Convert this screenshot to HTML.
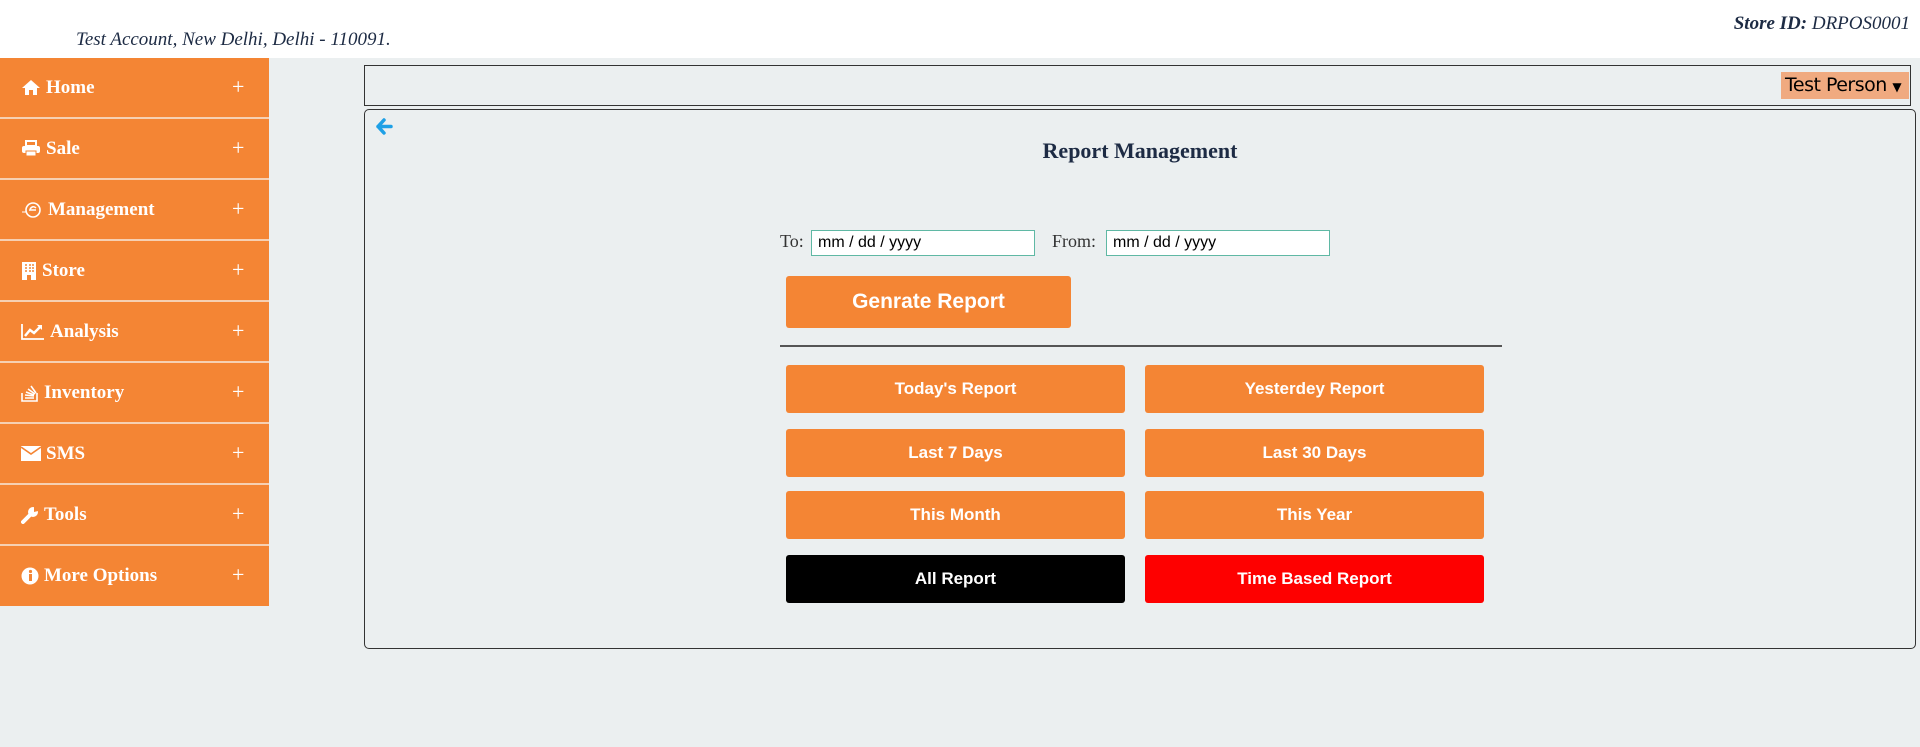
<!DOCTYPE html>
<html><head><meta charset="utf-8"><style>
*{margin:0;padding:0;box-sizing:border-box}
body{width:1920px;height:747px;background:#ebeff0;position:relative;overflow:hidden;font-family:"Liberation Serif",serif}
.hdr{position:absolute;left:0;top:0;width:1920px;height:58px;background:#fff}
.addr{position:absolute;left:76px;top:29px;font-style:italic;font-size:19px;color:#1d2b44;font-family:"Liberation Serif",serif}
.sid{position:absolute;right:10px;top:13px;font-style:italic;font-size:19px;color:#1d2b44}
.side{position:absolute;left:0;top:58px;width:269px}
.it{height:61px;background:#f48534;border-bottom:2px solid #f6d0b2;color:#fff;font-weight:bold;font-size:19px;position:relative;display:flex;align-items:center;padding-left:21px}
.it:last-child{border-bottom:none;height:60px}
.it svg{margin-right:5px}
.it .p{position:absolute;left:232px;font-weight:normal;font-size:22px;top:16px}
.bar{position:absolute;left:364px;top:65px;width:1547px;height:41px;border:1.5px solid #333;background:#ebeff0}
.tp{position:absolute;right:1px;top:6px;height:27px;width:128px;background:#f0aa80;font-family:"DejaVu Sans",sans-serif;font-size:19px;color:#000;padding-left:4px;line-height:27px;letter-spacing:-0.5px}
.main{position:absolute;left:364px;top:109px;width:1552px;height:540px;border:1.5px solid #333;border-radius:5px}
.title{position:absolute;left:0;width:100%;top:28px;text-align:center;font-weight:bold;font-size:22px;color:#1d2b44}
.lbl{position:absolute;font-size:18px;color:#333;top:121px}
.inp{position:absolute;top:120px;width:224px;height:26px;border:1.5px solid #5fb8a4;background:#fff;font-family:"Liberation Sans Narrow","Liberation Sans",sans-serif;font-size:16px;padding-left:6px;line-height:23px;color:#000}
.btn{position:absolute;width:339px;height:48px;background:#f48534;border-radius:3px;color:#fff;font-family:"Liberation Sans",sans-serif;font-weight:bold;font-size:17px;display:flex;align-items:center;justify-content:center}
</style></head><body>
<div class="hdr"><div class="addr">Test Account, New Delhi, Delhi - 110091.</div><div class="sid"><b>Store ID:</b> DRPOS0001</div></div>
<div class="side">
<div class="it"><svg width="20" height="17" viewBox="0 0 20 17"><path d="M10 1 L1 9 H4 V16 H8 V11 H12 V16 H16 V9 H19Z" fill="#fff"/></svg>Home<span class="p">+</span></div>
<div class="it"><svg width="20" height="17" viewBox="0 0 20 17"><rect x="5" y="1" width="10" height="5" fill="none" stroke="#fff" stroke-width="2"/><rect x="1" y="6" width="18" height="7" rx="2" fill="#fff"/><rect x="5" y="11" width="10" height="5" fill="#fff" stroke="#f48534"/></svg>Sale<span class="p">+</span></div>
<div class="it"><svg width="22" height="18" viewBox="0 0 22 18"><circle cx="12" cy="9" r="7" fill="none" stroke="#fff" stroke-width="1.6"/><path d="M8 9 H15 M15 7 Q12 4 9 8" stroke="#fff" fill="none" stroke-width="1.5"/><path d="M1 11 H6" stroke="#fff"/></svg>Management<span class="p">+</span></div>
<div class="it"><svg width="16" height="18" viewBox="0 0 16 18"><rect x="1" y="0" width="14" height="18" fill="#fff"/><path d="M4 3h2M8 3h2M11 3h2M4 6h2M8 6h2M11 6h2M4 9h2M8 9h2M11 9h2" stroke="#f48534" stroke-width="1.5"/><rect x="6" y="13" width="4" height="5" fill="#f48534"/></svg>Store<span class="p">+</span></div>
<div class="it"><svg width="24" height="17" viewBox="0 0 24 17"><path d="M1 1 V16 H23" stroke="#fff" stroke-width="1.8" fill="none"/><path d="M4 13 L9 7 L13 10 L20 3" stroke="#fff" stroke-width="2.5" fill="none"/><path d="M16 2 H21 V7Z" fill="#fff"/></svg>Analysis<span class="p">+</span></div>
<div class="it"><svg width="18" height="18" viewBox="0 0 18 18"><path d="M1 9 V17 H16 V9" stroke="#fff" stroke-width="1.6" fill="none"/><path d="M4 14h9M4 11l9 1M5 8l8 3M7 5l7 5M10 2l5 7" stroke="#fff" stroke-width="1.6"/></svg>Inventory<span class="p">+</span></div>
<div class="it"><svg width="20" height="15" viewBox="0 0 20 15"><rect x="0" y="0" width="20" height="15" fill="#fff"/><path d="M0 1 L10 8 L20 1" stroke="#f48534" stroke-width="1.6" fill="none"/></svg>SMS<span class="p">+</span></div>
<div class="it"><svg width="18" height="18" viewBox="0 0 18 18"><path d="M2 16 L10 8" stroke="#fff" stroke-width="4" stroke-linecap="round"/><circle cx="12" cy="6" r="5" fill="#fff"/><path d="M13 1 L17 1 L17 5 L13 6Z" fill="#f48534"/></svg>Tools<span class="p">+</span></div>
<div class="it"><svg width="18" height="18" viewBox="0 0 18 18"><circle cx="9" cy="9" r="8.5" fill="#fff"/><rect x="8" y="7" width="3" height="7" fill="#f48534"/><circle cx="9.5" cy="4.5" r="1.6" fill="#f48534"/></svg>More Options<span class="p">+</span></div>
</div>
<div class="bar"><div class="tp">Test Person <span style="font-size:12px">&#9660;</span></div></div>
<div class="main">
<svg style="position:absolute;left:10px;top:8px" width="18" height="17" viewBox="0 0 18 17"><path d="M9 2 L3 8.5 L9 15 M3 8.5 H16" stroke="#1ea0e6" stroke-width="3.5" fill="none" stroke-linecap="round" stroke-linejoin="round"/></svg>
<div class="title">Report Management</div>
<div class="lbl" style="left:415px">To:</div>
<div class="inp" style="left:446px">mm / dd / yyyy</div>
<div class="lbl" style="left:687px">From:</div>
<div class="inp" style="left:741px">mm / dd / yyyy</div>
<div class="btn" style="left:421px;top:166px;width:285px;height:52px;font-size:21px">Genrate Report</div>
<div style="position:absolute;left:415px;top:235px;width:722px;height:2px;background:#555"></div>
<div class="btn" style="left:421px;top:255px">Today's Report</div>
<div class="btn" style="left:780px;top:255px">Yesterdey Report</div>
<div class="btn" style="left:421px;top:319px">Last 7 Days</div>
<div class="btn" style="left:780px;top:319px">Last 30 Days</div>
<div class="btn" style="left:421px;top:381px">This Month</div>
<div class="btn" style="left:780px;top:381px">This Year</div>
<div class="btn" style="left:421px;top:445px;background:#000">All Report</div>
<div class="btn" style="left:780px;top:445px;background:#fe0000">Time Based Report</div>
</div>
</body></html>
